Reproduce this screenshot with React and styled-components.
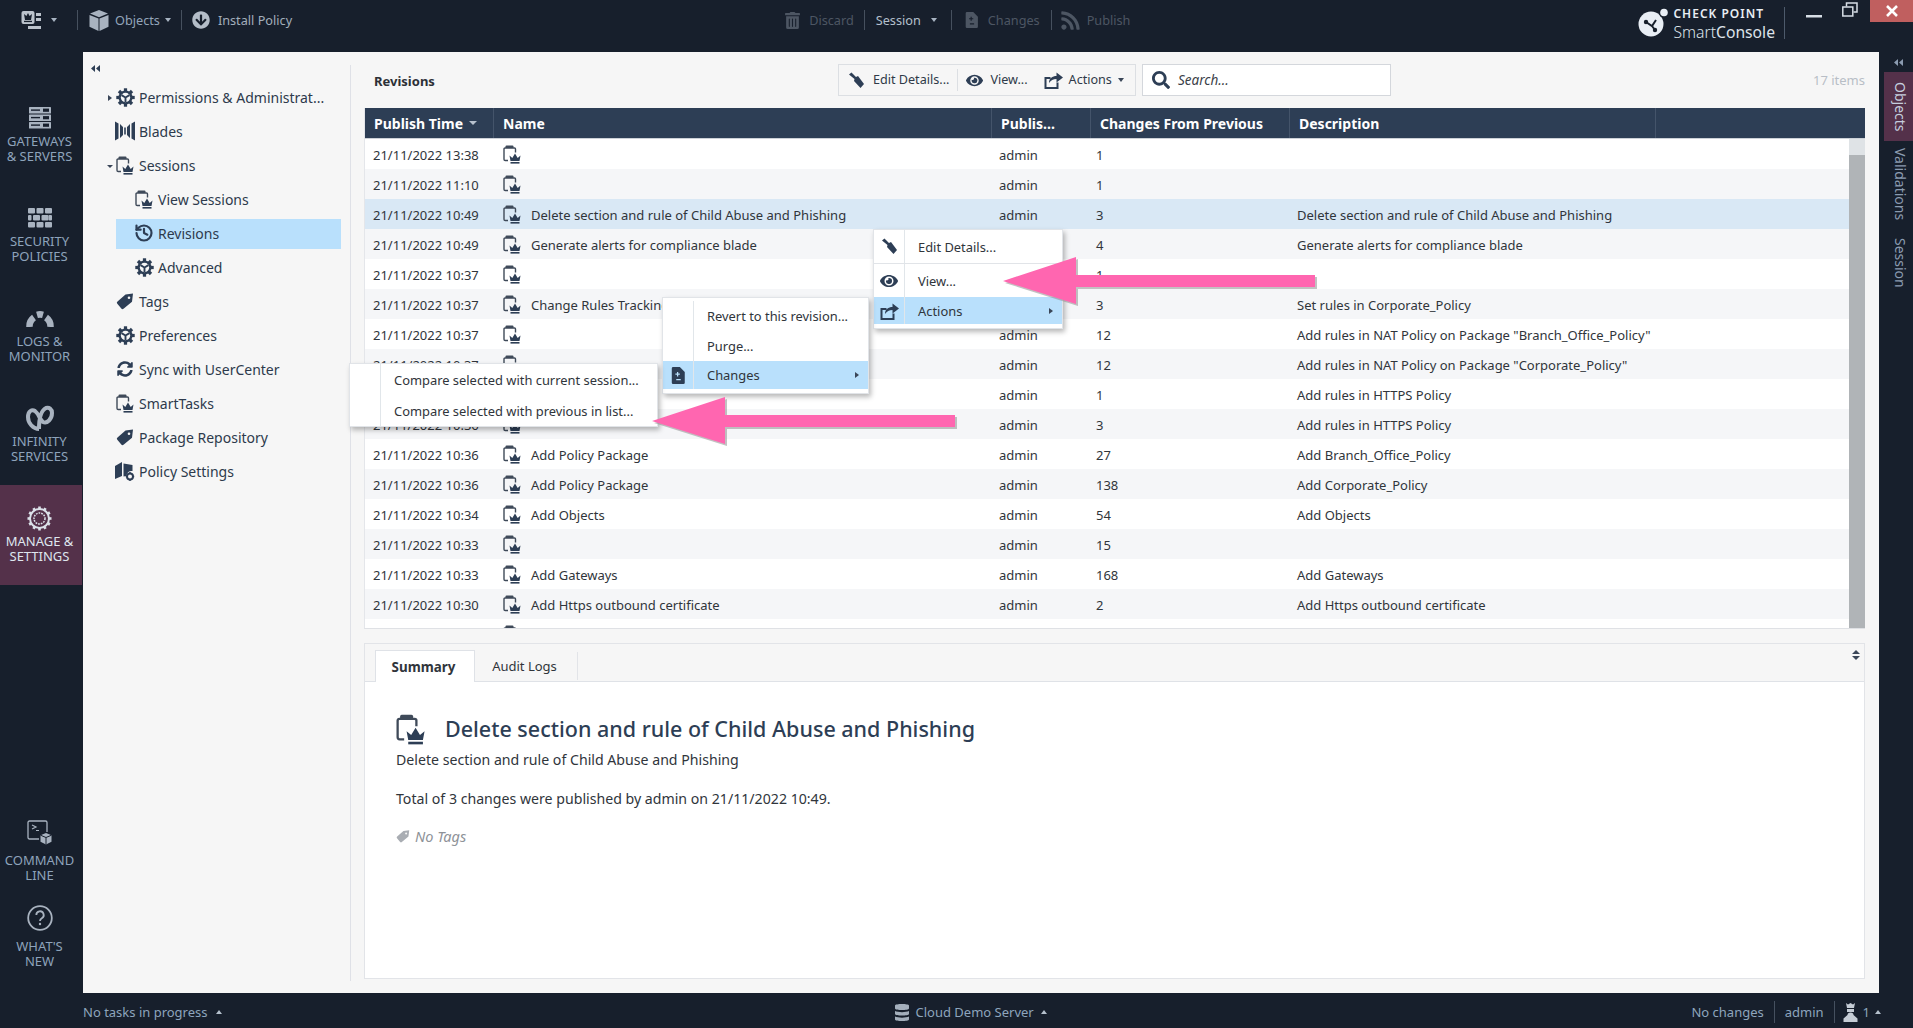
import React from "react";
import styled, { createGlobalStyle } from "styled-components";
import { FaEye, FaSearch, FaSyncAlt, FaRss, FaArrowCircleDown, FaTrashAlt } from "react-icons/fa";
import { History } from "lucide-react";

const dark = "#2d3e55";
const navBg = "#171f2c";

const Global = createGlobalStyle`
  html, body { margin: 0; padding: 0; height: 100%; overflow: hidden; }
  body { font-family: "Noto Sans", "Open Sans", sans-serif; font-size: 13px; color: #30353b; }
  * { box-sizing: border-box; }
`;

const Stage = styled.div`
  position: relative;
  width: 1913px;
  height: 1028px;
  display: grid;
  grid-template-rows: 52px 1fr 35px;
  background: ${navBg};
  overflow: hidden;
`;

/* top bar */
const TopBar = styled.header`
  display: flex;
  align-items: flex-start;
  padding-left: 21px;
  color: #9fb0c4;
`;
const TopRow = styled.div`
  display: flex;
  align-items: center;
  height: 40px;
  margin-left: ${(p) => p.$ml || 0}px;
`;
const TopText = styled.span`
  font-size: 12.7px;
  margin-left: ${(p) => p.$ml || 0}px;
  color: ${(p) => p.$color || "#93a5ba"};
`;
const TopSep = styled.i`
  display: block;
  width: 1px;
  height: 20px;
  background: ${(p) => p.$color || "#46505e"};
  margin-left: ${(p) => p.$ml || 0}px;
`;
const Caret = styled.i`
  display: block;
  width: 0;
  height: 0;
  border-left: ${(p) => p.$size || 3.5}px solid transparent;
  border-right: ${(p) => p.$size || 3.5}px solid transparent;
  border-top: ${(p) => (p.$up ? "none" : `${p.$size || 4}px solid ${p.$color || "#a8b4c2"}`)};
  border-bottom: ${(p) => (p.$up ? `${p.$size || 4}px solid ${p.$color || "#a8b4c2"}` : "none")};
  margin-left: ${(p) => p.$ml || 0}px;
`;
const IconSlot = styled.span`
  display: inline-flex;
  margin-left: ${(p) => p.$ml || 0}px;
  color: ${(p) => p.$color || "inherit"};
`;
const Brand = styled.div`
  display: flex;
  align-items: flex-start;
  margin-left: auto;
  height: 52px;
`;
const BrandMark = styled.svg`
  margin-top: 6px;
`;
const BrandText = styled.div`
  display: flex;
  flex-direction: column;
  margin-left: 5px;
  padding-top: 6px;
  color: #e8edf3;
`;
const BrandTop = styled.span`
  font-size: 12px;
  line-height: 15px;
  font-weight: 600;
  letter-spacing: 1px;
`;
const BrandName = styled.span`
  font-size: 15.7px;
  line-height: 22px;
  font-weight: 300;
  color: #dde3ea;
  b { font-weight: 400; }
`;
const BrandSep = styled.i`
  display: block;
  width: 1px;
  height: 32px;
  margin: 7px 0 0 9px;
  background: #4d5a6b;
`;
const WinButton = styled.div`
  width: ${(p) => p.$w}px;
  height: 22px;
  margin-left: ${(p) => p.$ml}px;
  display: flex;
  align-items: center;
  justify-content: center;
  color: #d7dee6;
  background: ${(p) => p.$bg || "transparent"};
`;

/* left rail */
const Middle = styled.div`
  display: flex;
  min-height: 0;
`;
const Rail = styled.nav`
  width: 83px;
  flex: none;
  display: flex;
  flex-direction: column;
  justify-content: space-between;
  padding: 33px 0 4px;
`;
const RailItem = styled.div`
  height: ${(p) => (p.$low ? 86 : 100)}px;
  width: 82px;
  display: flex;
  flex-direction: column;
  align-items: center;
  padding: ${(p) => (p.$low ? "0" : "22px")} 3px 0 0;
  background: ${(p) => (p.$active ? "#54314a" : "transparent")};
  color: ${(p) => (p.$active ? "#dfe6ef" : "#8ea3bb")};
`;
const RailIcon = styled.div`
  height: ${(p) => (p.$low ? 30 : 22)}px;
  display: flex;
  align-items: center;
  justify-content: center;
  color: ${(p) => (p.$active ? "#d9dfe7" : "#a9b3c0")};
`;
const RailLabel = styled.div`
  margin-top: ${(p) => (p.$low ? 6 : 5)}px;
  font-size: 13px;
  line-height: 15px;
  text-align: center;
  white-space: pre-line;
`;

/* content */
const Content = styled.main`
  flex: 1;
  min-width: 0;
  display: flex;
  background: #f6f6f6;
`;
const Tree = styled.aside`
  width: 268px;
  flex: none;
  margin: 13px 0 12px;
  border-right: 1px solid #dfe1e7;
  display: flex;
  flex-direction: column;
`;
const Collapse = styled.svg`
  margin-left: ${(p) => p.$ml || 0}px;
  flex: none;
`;
const TreeList = styled.ul`
  list-style: none;
  margin: 9px 0 0;
  padding: 0;
`;
const TreeRow = styled.li`
  display: flex;
  align-items: center;
  height: 34px;
  padding-left: 20px;
`;
const TreeCaret = styled.span`
  width: 13px;
  flex: none;
  display: flex;
  justify-content: center;
`;
const TreeInner = styled.div`
  display: flex;
  align-items: center;
  width: 225px;
  height: 30px;
  padding: 0 0 2px ${(p) => (p.$level === 2 ? 19 : 0)}px;
  background: ${(p) => (p.$selected ? "#b9e0fc" : "transparent")};
  color: #2d3a4c;
  font-size: 14px;
`;
const TreeIconBox = styled.span`
  width: 20px;
  height: 20px;
  margin: 0 4px 0 -1px;
  display: flex;
  align-items: center;
  justify-content: center;
  color: ${dark};
`;

const Main = styled.section`
  flex: 1;
  min-width: 0;
  display: flex;
  flex-direction: column;
  padding: 0 14px 14px 13px;
`;
const ToolRow = styled.div`
  height: 56px;
  display: flex;
  align-items: flex-start;
  padding-top: 12px;
`;
const PageTitle = styled.h2`
  margin: 8px 0 0 10px;
  font-size: 13px;
  line-height: 18px;
  font-weight: 700;
  color: #2c3036;
  width: 464px;
`;
const ToolGroup = styled.div`
  width: 298px;
  height: 32px;
  display: flex;
  align-items: center;
  border: 1px solid #dcdfe3;
  color: #2f3a48;
  padding-left: 9px;
`;
const ToolIcon = styled.span`
  display: inline-flex;
  margin-left: ${(p) => p.$ml || 0}px;
  color: ${dark};
`;
const ToolText = styled.span`
  margin-left: ${(p) => p.$ml || 0}px;
  font-size: 12.6px;
  padding-bottom: 2px;
`;
const ToolSep = styled.i`
  display: block;
  width: 1px;
  height: 22px;
  margin-left: ${(p) => p.$ml}px;
  background: #dcdfe3;
`;
const SearchBox = styled.div`
  width: 249px;
  height: 32px;
  margin-left: 6px;
  background: #fff;
  border: 1px solid #d4d7dc;
  display: flex;
  align-items: center;
  padding-left: 9px;
  color: ${dark};
  em {
    margin-left: 8px;
    font-size: 13.5px;
    color: #3b4148;
  }
`;
const Count = styled.span`
  margin: 7px 0 0 auto;
  font-size: 13px;
  color: #b8bec6;
`;

const Table = styled.div`
  height: 521px;
  flex: none;
  background: #fff;
  border-bottom: 1px solid #dfe1e5;
  border-left: 1px solid #e4e6ea;
  overflow: hidden;
  display: flex;
  flex-direction: column;
`;
const HeadRow = styled.div`
  display: grid;
  grid-template-columns: 128px 498px 99px 199px 366px 1fr;
  height: 31px;
  flex: none;
  background: ${dark};
  border-bottom: 1px solid #ccd1d7;
  color: #fff;
  font-weight: 700;
  font-size: 14px;
`;
const HeadCell = styled.div`
  display: flex;
  align-items: center;
  padding-left: 9px;
  border-left: ${(p) => (p.$first ? "none" : "1px solid #44546a")};
`;
const TableBody = styled.div`
  flex: 1;
  min-height: 0;
  display: flex;
`;
const Rows = styled.div`
  flex: 1;
  min-width: 0;
  overflow: hidden;
`;
const Scrollbar = styled.div`
  width: 16px;
  flex: none;
  background: #b0b4b7;
  border-top: 16px solid #dfe3e6;
`;
const Row = styled.div`
  display: grid;
  grid-template-columns: 128px 498px 99px 199px 1fr;
  height: 30px;
  padding-top: 1px;
  align-items: center;
  background: ${(p) => (p.$selected ? "#d9e8f5" : p.$odd ? "#f5f6f8" : "#fff")};
  font-size: 13px;
`;
const Cell = styled.div`
  display: flex;
  align-items: center;
  padding-left: ${(p) => p.$pl || 8}px;
  white-space: nowrap;
  overflow: hidden;
`;
const RowName = styled.span`
  margin-left: 9px;
`;

/* details */
const Detail = styled.div`
  position: relative;
  flex: 1;
  margin-top: 14px;
  min-height: 0;
  background: #fff;
  border: 1px solid #e2e4e8;
  display: flex;
  flex-direction: column;
`;
const TabStrip = styled.div`
  height: 38px;
  flex: none;
  display: flex;
  align-items: flex-end;
  background: #f6f6f6;
  border-bottom: 1px solid #dfe2e7;
  padding-left: 10px;
`;
const Tab = styled.div`
  height: ${(p) => (p.$active ? 32 : 28)}px;
  width: ${(p) => p.$w}px;
  margin-bottom: ${(p) => (p.$active ? -1 : 1)}px;
  padding-right: 3px;
  display: flex;
  align-items: center;
  justify-content: center;
  font-size: ${(p) => (p.$active ? 13.4 : 13)}px;
  font-weight: ${(p) => (p.$active ? 700 : 400)};
  background: ${(p) => (p.$active ? "#fff" : "transparent")};
  border: ${(p) => (p.$active ? "1px solid #dfe2e7" : "none")};
  border-bottom: none;
  border-right: ${(p) => (p.$active ? "1px solid #dfe2e7" : "1px solid #e2e4e8")};
`;
const Expand = styled.svg`
  position: absolute;
  top: 5px;
  right: 4px;
`;
const DetailBody = styled.div`
  padding: 32px 0 0 31px;
`;
const DetailHead = styled.div`
  display: flex;
  align-items: center;
  height: 30px;
`;
const DetailTitle = styled.h1`
  margin: 0 0 0 18px;
  font-size: 21.5px;
  font-weight: 500;
  color: #2d3e55;
  line-height: 30px;
`;
const DetailLine = styled.p`
  margin: ${(p) => p.$mt}px 0 0;
  font-size: 14.15px;
  line-height: 20px;
`;
const NoTags = styled.div`
  display: flex;
  align-items: center;
  margin-top: 18px;
  height: 18px;
  color: #8e9298;
  font-style: italic;
  font-size: 14.5px;
  gap: 5px;
`;

/* right rail */
const Side = styled.aside`
  width: 34px;
  flex: none;
  display: flex;
  flex-direction: column;
  align-items: flex-end;
  padding-top: 7px;
  color: #8b9bb0;
  font-size: 14px;
`;
const SideCollapse = styled.div`
  height: 13px;
  width: 29px;
  display: flex;
  justify-content: center;
`;
const SideTab = styled.div`
  width: 29px;
  height: ${(p) => p.$h}px;
  padding-left: 3px;
  writing-mode: vertical-rl;
  display: flex;
  align-items: center;
  justify-content: center;
  background: ${(p) => (p.$active ? "#54314a" : "transparent")};
  color: ${(p) => (p.$active ? "#c5cede" : "#8b9bb0")};
  margin-top: ${(p) => p.$mt || 0}px;
`;

/* status bar */
const Status = styled.footer`
  display: flex;
  align-items: center;
  padding: 3px 32px 0 83px;
  color: #8ea5bd;
  font-size: 13px;
`;
const StatusCenter = styled.div`
  display: flex;
  align-items: center;
  margin-left: 673px;
  gap: 7px;
`;
const StatusRight = styled.div`
  display: flex;
  align-items: center;
  margin-left: auto;
  gap: 10px;
`;
const StatusSep = styled.i`
  display: block;
  width: 1px;
  height: 22px;
  background: #45505f;
`;
const TightGroup = styled.div`
  display: flex;
  align-items: center;
  gap: 4px;
  margin-left: -3px;
`;

/* context menus */
const Menu = styled.div`
  position: absolute;
  left: ${(p) => p.$x}px;
  top: ${(p) => p.$y}px;
  width: ${(p) => p.$w}px;
  padding: ${(p) => p.$pad || "0"};
  background: #fff;
  border: 1px solid #e1e4e8;
  box-shadow: 2px 3px 5px rgba(0, 0, 0, 0.28);
  z-index: ${(p) => p.$z || 5};
`;
const MenuItem = styled.div`
  display: flex;
  height: ${(p) => p.$h}px;
  background: ${(p) => (p.$active ? "#b9e0fc" : "transparent")};
  border-bottom: ${(p) => (p.$line ? "1px solid #e1e4e8" : "none")};
  color: #30353b;
  font-size: 12.9px;
  align-items: stretch;
`;
const MenuGutter = styled.span`
  width: 31px;
  flex: none;
  display: flex;
  align-items: center;
  justify-content: center;
  color: ${dark};
  border-right: 1px solid #e1e6ea;
`;
const MenuLabel = styled.span`
  flex: 1;
  display: flex;
  align-items: center;
  justify-content: space-between;
  padding: 0 9px 0 13px;
`;
const SubArrow = styled.i`
  display: block;
  width: 0;
  height: 0;
  border-top: 3px solid transparent;
  border-bottom: 3px solid transparent;
  border-left: 4px solid #3a4658;
`;

const PinkArrow = styled.svg`
  position: absolute;
  left: ${(p) => p.$x}px;
  top: ${(p) => p.$y}px;
  z-index: 9;
  overflow: visible;
`;

/* drawings */
const SessionIcon = ({ size = 19 }) => (
  <svg width={size} height={size} viewBox="0 0 19 19" fill="none">
    <path d="M3.5 0.5h6a1 1 0 0 1 1 1V3h-8V1.5a1 1 0 0 1 1-1z" fill="#3f4a59" />
    <path d="M5 15.5H2.2A1.2 1.2 0 0 1 1 14.3V4a1 1 0 0 1 1-1h9.5a1 1 0 0 1 1 1v3.5" stroke="#3f4a59" strokeWidth="1.4" />
    <path d="M6.5 10.5l2.8 2.4 2.7-4.4 2.7 4.4 2.8-2.4-1 5.5H7.5z" fill={dark} />
    <rect x="7.5" y="17" width="9" height="1.6" fill={dark} />
  </svg>
);

const Gear = ({ size = 19 }) => (
  <svg width={size} height={size} viewBox="0 0 20 20">
    {[0, 45, 90, 135].map((a) => (
      <rect key={a} x="8.3" y="0.3" width="3.4" height="19.4" fill={dark} transform={`rotate(${a} 10 10)`} />
    ))}
    <circle cx="10" cy="10" r="7.4" fill={dark} />
    <circle cx="10" cy="10" r="4.9" fill="#f6f6f6" />
    <path d="M10 10V15M10 10L5.8 7.5M10 10l4.2-2.5" stroke={dark} strokeWidth="2" />
  </svg>
);

const ManageGear = () => (
  <svg width="25" height="25" viewBox="0 0 25 25" fill="none" stroke="#dbe1e9">
    {[0, 30, 60, 90, 120, 150].map((a) => (
      <rect key={a} x="11.2" y="0.5" width="2.6" height="24" fill="#dbe1e9" stroke="none" transform={`rotate(${a} 12.5 12.5)`} />
    ))}
    <circle cx="12.5" cy="12.5" r="9.5" fill="#54314a" strokeWidth="2" />
    <circle cx="12.5" cy="12.5" r="5.5" strokeWidth="1.5" strokeDasharray="1.7 1" />
  </svg>
);

const BladesIcon = () => (
  <svg width="20" height="20" viewBox="0 0 20 20" fill={dark}>
    <path d="M0 0.5l3.5 2v15l-3.5 2zM5 3l3 3v8l-3 3zM12 6l3-3v14l-3-3zM16.5 2.5l3.5-2v19l-3.5-2z" />
    <path d="M9.2 6.5h1.6v7H9.2z" />
  </svg>
);

const TagIcon = ({ color = dark, size = 18 }) => (
  <svg width={size} height={size} viewBox="0 0 18 18">
    <path d="M17 1.5l-1 8.3-8.5 7a1.6 1.6 0 0 1-2.2-.2L1.3 11.8a1.6 1.6 0 0 1 .2-2.3L9.5 2.5z" fill={color} />
    <circle cx="13" cy="5.7" r="1.3" fill="#f6f6f6" />
  </svg>
);

const PolicySettingsIcon = () => (
  <svg width="20" height="20" viewBox="0 0 20 20" fill={dark}>
    <path d="M0 5l7-4v14l-7 3z" />
    <path d="M8.5 2.5l9 1.5v6a5 5 0 0 0-6 5l-3 .5z" />
    <circle cx="15" cy="15.5" r="3" fill="none" stroke={dark} strokeWidth="2" />
    <path d="M15 11v2M15 18v2M10.8 15.5h2M17.2 15.5h2" stroke={dark} strokeWidth="1.5" />
  </svg>
);

const WrenchIcon = () => (
  <svg width="17" height="17" viewBox="0 0 17 17" fill={dark}>
    <path d="M1 2.5L3.5 0.5 8 5l2-1 6 8-3.5 4-6.5-7 .5-2z" />
  </svg>
);

const ShareIcon = ({ size = 20 }) => (
  <svg width={size} height={size} viewBox="0 0 20 20" fill={dark}>
    <path d="M1.5 7h6v2h-4v8h10v-4.5h2V19h-14z" />
    <path d="M6 13c0-5 3.5-7 7.5-7V2.5L20 7.5l-6.5 5V9C10 9 8 10.5 6 13z" />
  </svg>
);

const ChangesIcon = ({ color = dark, size = 17, mark = navBg }) => (
  <svg width={size} height={size + 2} viewBox="0 0 15 19">
    <path d="M1.5 0H9l5.5 5.5v12a1.5 1.5 0 0 1-1.5 1.5H1.5A1.5 1.5 0 0 1 0 17.5v-16A1.5 1.5 0 0 1 1.5 0z" fill={color} />
    <path d="M4 8h5M6.5 5.5v5M5 14h5" stroke={mark} strokeWidth="1.4" />
  </svg>
);

const CubeIcon = () => (
  <svg width="20" height="21" viewBox="0 0 20 21" fill="#a9b3c0">
    <path d="M10 0l9 3.6L10 7.2 1 3.6z" />
    <path d="M0.5 5l9 3.6V21l-9-4.2z" />
    <path d="M10.5 8.6l9-3.6v11.8L10.5 21z" />
  </svg>
);

const AppIcon = () => (
  <svg width="21" height="20" viewBox="0 0 21 20">
    <rect x="0.5" y="1" width="13" height="13" rx="2" fill="#bcc3cc" />
    <path d="M3 4l2.4 2L7 3l1.6 3 2.4-2-1 6H4z" fill={navBg} />
    <rect x="3" y="10.8" width="8" height="1.3" fill={navBg} />
    <rect x="15" y="3" width="5" height="3" fill="#bcc3cc" />
    <rect x="15" y="8" width="5" height="3" fill="#bcc3cc" />
    <rect x="7" y="16" width="13" height="3" fill="#bcc3cc" />
  </svg>
);

const ServersIcon = () => (
  <svg width="22" height="22" viewBox="0 0 22 22">
    {[0, 7.5, 15].map((y) => (
      <g key={y}>
        <rect y={y} width="22" height="6.5" rx="0.6" fill="#a9b3c0" />
        <rect x="2" y={y + 2.4} width="9" height="1.4" fill={navBg} />
        <rect x="14" y={y + 1.6} width="6" height="3.2" fill={navBg} />
      </g>
    ))}
  </svg>
);

const WallIcon = () => (
  <svg width="24" height="20" viewBox="0 0 24 20" fill="#a9b3c0">
    {[0, 8.5, 17].map((x) => <rect key={x} x={x} y="0" width="7" height="5.5" rx="1" />)}
    <rect x="0" y="7" width="3.5" height="5.5" rx="1" />
    {[5, 13.5].map((x) => <rect key={x} x={x} y="7" width="7" height="5.5" rx="1" />)}
    <rect x="20.5" y="7" width="3.5" height="5.5" rx="1" />
    {[0, 8.5, 17].map((x) => <rect key={x} x={x} y="14" width="7" height="5.5" rx="1" />)}
  </svg>
);

const GaugeIcon = () => (
  <svg width="28" height="18" viewBox="0 0 28 18" fill="none" stroke="#a9b3c0" strokeWidth="6.5">
    <path d="M3.5 18A11 11 0 0 1 8 8.5" />
    <path d="M11 5.8a11 11 0 0 1 6 0" />
    <path d="M20 8.5A11 11 0 0 1 24.5 18" />
  </svg>
);

const InfinityIcon = () => (
  <svg width="30" height="26" viewBox="0 0 30 26" fill="none" stroke="#a9b3c0" strokeWidth="4">
    <path d="M14 24C8 24 3 18 3 12S7 4 10 6c4 3 5 9 8 11 4 2 9-3 9-9 0-4-3-6-6-5-4 2-7 9-7 21" />
  </svg>
);

const ConsoleIcon = () => (
  <svg width="26" height="25" viewBox="0 0 26 25" fill="none">
    <path d="M12 19H2.5A1.5 1.5 0 0 1 1 17.5v-15A1.5 1.5 0 0 1 2.5 1h16A1.5 1.5 0 0 1 20 2.5V12" stroke="#a9b3c0" strokeWidth="1.3" />
    <path d="M5 5l4 2-4 2M9 10.5h3" stroke="#a9b3c0" strokeWidth="1.2" />
    <path d="M19 13l5.5 2.2v6.5L19 24.5l-5.5-2.8v-6.5z" fill="#a9b3c0" />
    <path d="M19 17.5v7M13.5 15.2l5.5 2.3 5.5-2.3" stroke={navBg} strokeWidth="1" />
  </svg>
);

const HelpIcon = () => (
  <svg width="26" height="26" viewBox="0 0 26 26" fill="none">
    <circle cx="13" cy="13" r="11.8" stroke="#a9b3c0" strokeWidth="1.8" />
    <path d="M9.3 10a3.7 3.7 0 1 1 5.5 3.2c-1.2.7-1.8 1.3-1.8 2.8" stroke="#a9b3c0" strokeWidth="1.8" />
    <circle cx="13" cy="19" r="1.2" fill="#a9b3c0" />
  </svg>
);

const CollapseIcon = ({ color = dark, ml }) => (
  <Collapse $ml={ml} width="9" height="7" viewBox="0 0 9 7" fill={color}>
    <path d="M4 0v7L0 3.5zM9 0v7L5 3.5z" />
  </Collapse>
);

const DbIcon = () => (
  <svg width="14" height="19" viewBox="0 0 14 19" fill="#a4afbc">
    <path d="M0 2.5C0 .5 14 .5 14 2.5v3c0 2-14 2-14 0zM0 8c3 1.5 11 1.5 14 0v3c0 2-14 2-14 0zM0 13.5c3 1.5 11 1.5 14 0v3c0 2-14 2-14 0z" />
  </svg>
);

const AdminIcon = () => (
  <svg width="17" height="19" viewBox="0 0 16 19" fill="#c5ccd5">
    <path d="M3.5 0l2 1.6L8 0l2.5 1.6L12.5 0l-1 5h-7z" />
    <rect x="4.5" y="6" width="7" height="3" />
    <path d="M8 9.5c2 0 3 1 3 2.5l4 3.5V19H1v-3.5L5 12c0-1.5 1-2.5 3-2.5z" />
  </svg>
);

const arrowPath = (len) => `M0 24 L73 0 L73 18 L${len} 18 L${len} 30 L73 30 L73 47 Z`;
const Arrow = ({ x, y, len }) => (
  <PinkArrow $x={x} $y={y} width={len} height={48} viewBox={`0 0 ${len} 48`}>
    <path d={arrowPath(len)} fill="#8f8f8f" opacity="0.55" transform="translate(2 2)" />
    <path d={arrowPath(len)} fill="#ff66b0" />
  </PinkArrow>
);

const treeItems = [
  { label: "Permissions & Administrat...", icon: <Gear />, caret: "right" },
  { label: "Blades", icon: <BladesIcon /> },
  { label: "Sessions", icon: <SessionIcon />, caret: "down" },
  { label: "View Sessions", icon: <SessionIcon />, level: 2 },
  { label: "Revisions", icon: <History size={20} strokeWidth={2.6} />, level: 2, selected: true },
  { label: "Advanced", icon: <Gear />, level: 2 },
  { label: "Tags", icon: <TagIcon /> },
  { label: "Preferences", icon: <Gear /> },
  { label: "Sync with UserCenter", icon: <FaSyncAlt size={16} /> },
  { label: "SmartTasks", icon: <SessionIcon /> },
  { label: "Package Repository", icon: <TagIcon /> },
  { label: "Policy Settings", icon: <PolicySettingsIcon /> },
];

const delName = "Delete section and rule of Child Abuse and Phishing";
const rows = [
  ["13:38", "", "1", ""],
  ["11:10", "", "1", ""],
  ["10:49", delName, "3", delName],
  ["10:49", "Generate alerts for compliance blade", "4", "Generate alerts for compliance blade"],
  ["10:37", "", "1", ""],
  ["10:37", "Change Rules Tracking", "3", "Set rules in Corporate_Policy"],
  ["10:37", "", "12", 'Add rules in NAT Policy on Package "Branch_Office_Policy"'],
  ["10:37", "", "12", 'Add rules in NAT Policy on Package "Corporate_Policy"'],
  ["10:36", "", "1", "Add rules in HTTPS Policy"],
  ["10:36", "", "3", "Add rules in HTTPS Policy"],
  ["10:36", "Add Policy Package", "27", "Add Branch_Office_Policy"],
  ["10:36", "Add Policy Package", "138", "Add Corporate_Policy"],
  ["10:34", "Add Objects", "54", "Add Objects"],
  ["10:33", "", "15", ""],
  ["10:33", "Add Gateways", "168", "Add Gateways"],
  ["10:30", "Add Https outbound certificate", "2", "Add Https outbound certificate"],
  ["10:30", "", "1", ""],
];

const TreeCaretIcon = ({ dir }) => {
  if (dir === "down") return <Caret $color="#3a4658" $size={3.5} />;
  return <SubArrow />;
};

export default function App() {
  return (
    <Stage>
      <Global />
      <TopBar>
        <TopRow>
          <AppIcon />
          <Caret $ml={9} />
          <TopSep $ml={20} />
          <IconSlot $ml={11}><CubeIcon /></IconSlot>
          <TopText $ml={6}>Objects</TopText>
          <Caret $ml={5} />
          <TopSep $ml={10} />
          <IconSlot $ml={10} $color="#b4bdc8"><FaArrowCircleDown size={18} /></IconSlot>
          <TopText $ml={8} $color="#a2aebb">Install Policy</TopText>
        </TopRow>
        <TopRow $ml={492}>
          <IconSlot $color="#4d5663"><FaTrashAlt size={17} /></IconSlot>
          <TopText $ml={8} $color="#4d5663">Discard</TopText>
          <TopSep $ml={10} />
          <TopText $ml={11} $color="#b4c0cd">Session</TopText>
          <Caret $ml={10} />
          <TopSep $ml={14} />
          <IconSlot $ml={13}><ChangesIcon color="#4d5663" size={14} /></IconSlot>
          <TopText $ml={9} $color="#4d5663">Changes</TopText>
          <TopSep $ml={11} />
          <IconSlot $ml={8} $color="#4d5663"><FaRss size={21} /></IconSlot>
          <TopText $ml={6} $color="#4d5663">Publish</TopText>
        </TopRow>
        <Brand>
          <BrandMark width="30" height="34" viewBox="0 0 30 34">
            <circle cx="13" cy="18" r="12.5" fill="#e9eef5" />
            <circle cx="25.5" cy="7" r="4.5" fill={navBg} />
            <circle cx="26" cy="6.5" r="3.8" fill="#e9eef5" />
            <path d="M8 16l6 4 4-6M14 20l3 4" stroke={navBg} strokeWidth="2" fill="none" />
            <circle cx="8" cy="16" r="2.2" fill={navBg} />
            <circle cx="17" cy="24" r="2.2" fill={navBg} />
          </BrandMark>
          <BrandText>
            <BrandTop>CHECK POINT</BrandTop>
            <BrandName>Smart<b>Console</b></BrandName>
          </BrandText>
          <BrandSep />
          <WinButton $w={16} $ml={21}>
            <svg width="16" height="22" viewBox="0 0 16 22"><rect y="15" width="16" height="2.5" fill="#d7dee6" /></svg>
          </WinButton>
          <WinButton $w={16} $ml={20}>
            <svg width="16" height="22" viewBox="0 0 16 22" fill="none" stroke="#d7dee6" strokeWidth="1.5"><rect x="0.8" y="7" width="10" height="9" /><path d="M4.5 6.5V3H15v9h-3.500" /></svg>
          </WinButton>
          <WinButton $w={43} $ml={12} $bg="#c05f5f">
            <svg width="12" height="12" viewBox="0 0 12 12" stroke="#fff" strokeWidth="2.6"><path d="M1 1l10 10M11 1L1 11" /></svg>
          </WinButton>
        </Brand>
      </TopBar>

      <Middle>
        <Rail>
          <div>
            <RailItem><RailIcon><ServersIcon /></RailIcon><RailLabel>{"GATEWAYS\n& SERVERS"}</RailLabel></RailItem>
            <RailItem><RailIcon><WallIcon /></RailIcon><RailLabel>{"SECURITY\nPOLICIES"}</RailLabel></RailItem>
            <RailItem><RailIcon><GaugeIcon /></RailIcon><RailLabel>{"LOGS &\nMONITOR"}</RailLabel></RailItem>
            <RailItem><RailIcon><InfinityIcon /></RailIcon><RailLabel>{"INFINITY\nSERVICES"}</RailLabel></RailItem>
            <RailItem $active>
              <RailIcon $active><ManageGear /></RailIcon>
              <RailLabel>{"MANAGE &\nSETTINGS"}</RailLabel>
            </RailItem>
          </div>
          <div>
            <RailItem $low><RailIcon $low><ConsoleIcon /></RailIcon><RailLabel $low>{"COMMAND\nLINE"}</RailLabel></RailItem>
            <RailItem $low><RailIcon $low><HelpIcon /></RailIcon><RailLabel $low>{"WHAT'S\nNEW"}</RailLabel></RailItem>
          </div>
        </Rail>

        <Content>
          <Tree>
            <CollapseIcon ml={8} />
            <TreeList>
              {treeItems.map((t) => (
                <TreeRow key={t.label}>
                  <TreeCaret>{t.caret && <TreeCaretIcon dir={t.caret} />}</TreeCaret>
                  <TreeInner $level={t.level} $selected={t.selected}>
                    <TreeIconBox>{t.icon}</TreeIconBox>
                    {t.label}
                  </TreeInner>
                </TreeRow>
              ))}
            </TreeList>
          </Tree>

          <Main>
            <ToolRow>
              <PageTitle>Revisions</PageTitle>
              <ToolGroup>
                <ToolIcon><WrenchIcon /></ToolIcon>
                <ToolText $ml={8}>Edit Details...</ToolText>
                <ToolSep $ml={8} />
                <ToolIcon $ml={8}><FaEye size={17} /></ToolIcon>
                <ToolText $ml={7}>View...</ToolText>
                <ToolIcon $ml={15}><ShareIcon /></ToolIcon>
                <ToolText $ml={6}>Actions</ToolText>
                <Caret $ml={6} $color="#3a4658" />
              </ToolGroup>
              <SearchBox>
                <FaSearch size={18} />
                <em>Search...</em>
              </SearchBox>
              <Count>17 items</Count>
            </ToolRow>

            <Table>
              <HeadRow>
                <HeadCell $first>Publish Time<Caret $ml={6} $color="#b8c2ce" $size={4} /></HeadCell>
                <HeadCell>Name</HeadCell>
                <HeadCell>Publis...</HeadCell>
                <HeadCell>Changes From Previous</HeadCell>
                <HeadCell>Description</HeadCell>
                <HeadCell />
              </HeadRow>
              <TableBody>
                <Rows>
                  {rows.map((r, i) => (
                    <Row key={i} $odd={i % 2 === 1} $selected={i === 2}>
                      <Cell>21/11/2022 {r[0]}</Cell>
                      <Cell $pl={10}>
                        <SessionIcon />
                        {r[1] && <RowName>{r[1]}</RowName>}
                      </Cell>
                      <Cell>admin</Cell>
                      <Cell $pl={6}>{r[2]}</Cell>
                      <Cell>{r[3]}</Cell>
                    </Row>
                  ))}
                </Rows>
                <Scrollbar />
              </TableBody>
            </Table>

            <Detail>
              <TabStrip>
                <Tab $active $w={100}>Summary</Tab>
                <Tab $w={103}>Audit Logs</Tab>
              </TabStrip>
              <Expand width="8" height="12" viewBox="0 0 8 12" fill="#3a4658">
                <path d="M0 5L4 1l4 4zM0 7h8l-4 4z" />
              </Expand>
              <DetailBody>
                <DetailHead>
                  <SessionIcon size={31} />
                  <DetailTitle>{delName}</DetailTitle>
                </DetailHead>
                <DetailLine $mt={6}>{delName}</DetailLine>
                <DetailLine $mt={19}>Total of 3 changes were published by admin on 21/11/2022 10:49.</DetailLine>
                <NoTags><TagIcon color="#a9adb3" size={14} />No Tags</NoTags>
              </DetailBody>
            </Detail>
          </Main>
        </Content>

        <Side>
          <SideCollapse><CollapseIcon color="#8b9bb0" /></SideCollapse>
          <SideTab $active $h={69}>Objects</SideTab>
          <SideTab $h={73} $mt={7}>Validations</SideTab>
          <SideTab $h={49} $mt={17}>Session</SideTab>
        </Side>
      </Middle>

      <Status>
        No tasks in progress
        <Caret $ml={8} $up $color="#b5c0cc" />
        <StatusCenter>
          <DbIcon />
          <span>Cloud Demo Server</span>
          <Caret $up $color="#b5c0cc" />
        </StatusCenter>
        <StatusRight>
          <span>No changes</span>
          <StatusSep />
          <span>admin</span>
          <StatusSep />
          <TightGroup>
            <AdminIcon />
            <span>1</span>
            <Caret $ml={1} $up $color="#b5c0cc" />
          </TightGroup>
        </StatusRight>
      </Status>

      <Menu $x={873} $y={229} $w={190} $pad="0 0 4px">
        <MenuItem $h={34} $line><MenuGutter><WrenchIcon /></MenuGutter><MenuLabel>Edit Details...</MenuLabel></MenuItem>
        <MenuItem $h={33}><MenuGutter><FaEye size={18} /></MenuGutter><MenuLabel>View...</MenuLabel></MenuItem>
        <MenuItem $h={27} $active><MenuGutter><ShareIcon /></MenuGutter><MenuLabel>Actions<SubArrow /></MenuLabel></MenuItem>
      </Menu>
      <Menu $x={662} $y={297} $w={207} $pad="3px 0 4px" $z={6}>
        <MenuItem $h={30}><MenuGutter /><MenuLabel>Revert to this revision...</MenuLabel></MenuItem>
        <MenuItem $h={30}><MenuGutter /><MenuLabel>Purge...</MenuLabel></MenuItem>
        <MenuItem $h={28} $active><MenuGutter><ChangesIcon size={15} color={dark} mark="#b9e0fc" /></MenuGutter><MenuLabel>Changes<SubArrow /></MenuLabel></MenuItem>
      </Menu>
      <Menu $x={349} $y={363} $w={309} $z={7}>
        <MenuItem $h={31}><MenuGutter /><MenuLabel>Compare selected with current session...</MenuLabel></MenuItem>
        <MenuItem $h={31}><MenuGutter /><MenuLabel>Compare selected with previous in list...</MenuLabel></MenuItem>
      </Menu>

      <Arrow x={1003} y={257} len={312} />
      <Arrow x={652} y={397} len={303} />
    </Stage>
  );
}
